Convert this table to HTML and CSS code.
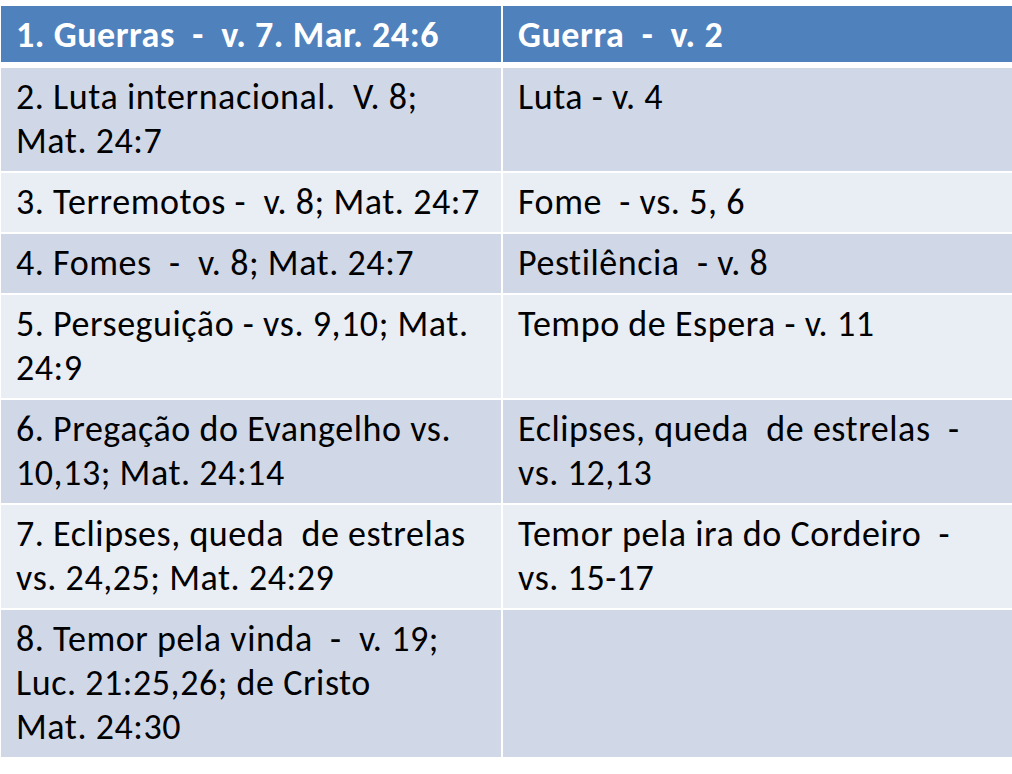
FILE: index.html
```html
<!DOCTYPE html>
<html lang="pt">
<head>
<meta charset="utf-8">
<title>Sinais</title>
<link rel="stylesheet" href="styles.css">
</head>
<body>
<div class="sheet">
  <div class="row head">
    <div class="cell">1. Guerras  -  v. 7. Mar. 24:6</div>
    <div class="cell">Guerra  -  v. 2</div>
  </div>
  <div class="row dark">
    <div class="cell">2. Luta internacional.  V. 8;<br>Mat. 24:7</div>
    <div class="cell">Luta - v. 4</div>
  </div>
  <div class="row light">
    <div class="cell">3. Terremotos -  v. 8; Mat. 24:7</div>
    <div class="cell">Fome  - vs. 5, 6</div>
  </div>
  <div class="row dark">
    <div class="cell">4. Fomes  -  v. 8; Mat. 24:7</div>
    <div class="cell">Pestilência  - v. 8</div>
  </div>
  <div class="row light">
    <div class="cell">5. Perseguição - vs. 9,10; Mat.<br>24:9</div>
    <div class="cell">Tempo de Espera - v. 11</div>
  </div>
  <div class="row dark">
    <div class="cell">6. Pregação do Evangelho vs.<br>10,13; Mat. 24:14</div>
    <div class="cell">Eclipses, queda  de estrelas  -<br>vs. 12,13</div>
  </div>
  <div class="row light">
    <div class="cell">7. Eclipses, queda  de estrelas<br>vs. 24,25; Mat. 24:29</div>
    <div class="cell">Temor pela ira do Cordeiro  -<br>vs. 15-17</div>
  </div>
  <div class="row dark">
    <div class="cell">8. Temor pela vinda  -  v. 19;<br>Luc. 21:25,26; de Cristo<br>Mat. 24:30</div>
    <div class="cell"></div>
  </div>
</div>
</body>
</html>
```

FILE: styles.css
```css
html, body {
  margin: 0;
  padding: 0;
  background: #ffffff;
}

.sheet {
  display: flex;
  flex-direction: column;
  gap: 2px;
  padding: 6px 0 0 1px;
  font-family: Carlito, Lato, "Liberation Sans", sans-serif;
  font-size: 36px;
  letter-spacing: 0.55px;
  color: #000000;
}

.row {
  display: grid;
  grid-template-columns: 500px 1fr;
  gap: 2px;
}

.cell {
  padding: 7px 15px 8px;
  line-height: 44px;
  white-space: pre;
  overflow: hidden;
}

.head {
  margin-bottom: 4px;
}

.head .cell {
  background: #4f81bd;
  color: #ffffff;
  font-weight: bold;
  padding: 7px 15px 5px;
}

.dark .cell {
  background: #d0d8e8;
}

.light .cell {
  background: #e9edf4;
}
```
